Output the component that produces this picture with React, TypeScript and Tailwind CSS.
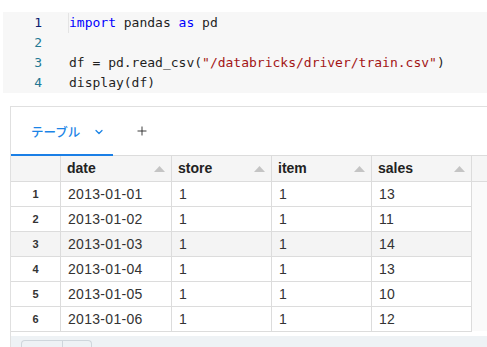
import { ChevronDown, Plus } from 'lucide-react';

const rows = [
  ['2013-01-01', '1', '1', '13'],
  ['2013-01-02', '1', '1', '11'],
  ['2013-01-03', '1', '1', '14'],
  ['2013-01-04', '1', '1', '13'],
  ['2013-01-05', '1', '1', '10'],
  ['2013-01-06', '1', '1', '12'],
];

const cols = [
  { name: 'date', w: 'w-[111px]' },
  { name: 'store', w: 'w-[100px]' },
  { name: 'item', w: 'w-[100px]' },
  { name: 'sales', w: 'w-[100px]' },
];

function SortArrow() {
  return (
    <svg width="11" height="6" viewBox="0 0 11 6" className="ml-auto mr-[6px]">
      <path d="M0 6 L5.5 0 L11 6 Z" fill="#c4c4c4" />
    </svg>
  );
}

export default function App() {
  const mono = { fontFamily: '"DejaVu Sans Mono", monospace' };

  return (
    <div className="relative h-[347px] w-[487px] overflow-hidden bg-white font-['Liberation_Sans',sans-serif]">
      {/* Code cell */}
      <div className="ml-[3px] mt-[12px] h-[81px] bg-[#f7f7f7] pt-[1px] text-[13px] leading-[20px]" style={mono}>
        {[
          <>
            <span className="text-[#0000ff]">import</span> pandas <span className="text-[#0000ff]">as</span> pd
          </>,
          <></>,
          <>
            df = pd.read_csv(<span className="text-[#a31515]">"/databricks/driver/train.csv"</span>)
          </>,
          <>display(df)</>,
        ].map((line, i) => (
          <div key={i} className="flex h-[20px]">
            <span className={`w-[39px] text-right ${i === 0 ? 'text-[#0b216f]' : 'text-[#237893]'}`}>{i + 1}</span>
            <span className={`whitespace-pre text-[#1f1f1f] ${i === 0 ? 'ml-[26px] border-l border-[#e4e4e4]' : 'ml-[27px]'}`}>{line}</span>
          </div>
        ))}
      </div>

      {/* Result panel */}
      <div className="ml-[10px] mt-[13px] border-l border-t border-[#e0e0e0]">
        <div className="flex h-[49px] items-center border-b border-[#dcdcdc]">
          <div className="relative flex h-full w-[102px] items-center pl-[20px] pt-[2px]">
            <span className="text-[12.5px] font-medium text-[#1b84e6] font-['Noto_Sans_CJK_JP',sans-serif]">テーブル</span>
            <ChevronDown className="ml-[13px] h-[12px] w-[12px] text-[#1b84e6]" strokeWidth={2.5} />
            <div className="absolute bottom-[-1px] left-0 h-[2px] w-[102px] bg-[#1a7fe6]" />
          </div>
          <Plus className="ml-[22px] h-[14px] w-[14px] text-[#222]" strokeWidth={1.5} />
        </div>

        <div className="flex">
          <div className="text-[14px] tracking-[0.3px] text-[#222]">
            <div className="flex h-[26px] items-center border-b border-[#dcdcdc] bg-[#f5f5f5] font-bold tracking-normal">
              <div className="h-full w-[50px] border-r border-[#dcdcdc]" />
              {cols.map((c) => (
                <div key={c.name} className={`flex h-full items-center border-r border-[#dcdcdc] pl-[6px] ${c.w}`}>
                  <span>{c.name}</span>
                  <SortArrow />
                </div>
              ))}
            </div>
            {rows.map((r, i) => (
              <div key={i} className={`flex h-[25px] items-center border-b border-[#dcdcdc] ${i === 2 ? 'bg-[#f4f4f4]' : 'bg-white'}`}>
                <div className="flex h-full w-[50px] items-center justify-center border-r border-[#dcdcdc] text-[11px] font-bold tracking-normal text-[#333]">
                  {i + 1}
                </div>
                {r.map((v, j) => (
                  <div key={j} className={`flex h-full items-center border-r border-[#dcdcdc] pl-[7px] text-[#333] ${cols[j].w}`}>
                    {v}
                  </div>
                ))}
              </div>
            ))}
          </div>
          <div className="flex-1">
            <div className="h-[26px] border-b border-[#dcdcdc] bg-[#f5f5f5]" />
            <div className="h-[149px] bg-[#fafafa]" />
          </div>
        </div>

        <div className="h-[4px]" />
        <div className="h-[20px] bg-[#eef2f5] pl-[10px] pt-[4px]">
          <div className="flex h-[16px] w-[71px] rounded-t-[4px] border border-b-0 border-[#cfd6dc]">
            <div className="w-[41px] border-r border-[#cfd6dc]" />
          </div>
        </div>
      </div>
    </div>
  );
}
